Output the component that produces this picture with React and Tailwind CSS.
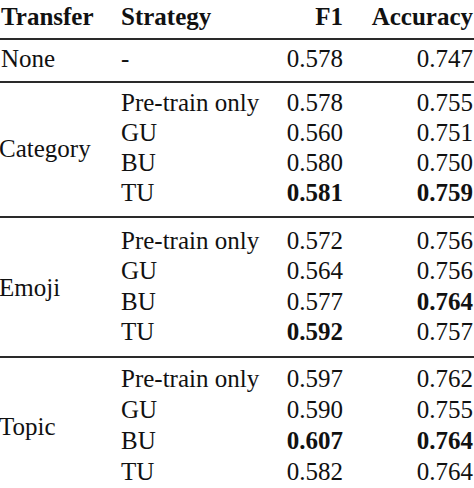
import React from 'react';

// Results table: transfer source x update strategy
const groups = [
  {
    name: 'Category',
    pt: 'pt-[4.5px]',
    pb: 'pb-[8.5px]',
    rowH: 'h-[30px]',
    rows: [
      { s: 'Pre-train only', f1: '0.578', acc: '0.755' },
      { s: 'GU', f1: '0.560', acc: '0.751' },
      { s: 'BU', f1: '0.580', acc: '0.750' },
      { s: 'TU', f1: '0.581', acc: '0.759', f1Bold: true, accBold: true },
    ],
  },
  {
    name: 'Emoji',
    pt: 'pt-[7.5px]',
    pb: 'pb-[8.5px]',
    rowH: 'h-[30.5px]',
    rows: [
      { s: 'Pre-train only', f1: '0.572', acc: '0.756' },
      { s: 'GU', f1: '0.564', acc: '0.756' },
      { s: 'BU', f1: '0.577', acc: '0.764', accBold: true },
      { s: 'TU', f1: '0.592', acc: '0.757', f1Bold: true },
    ],
  },
  {
    name: 'Topic',
    pt: 'pt-[5.5px]',
    pb: 'pb-0',
    rowH: 'h-[31px]',
    rows: [
      { s: 'Pre-train only', f1: '0.597', acc: '0.762' },
      { s: 'GU', f1: '0.590', acc: '0.755' },
      { s: 'BU', f1: '0.607', acc: '0.764', f1Bold: true, accBold: true },
      { s: 'TU', f1: '0.582', acc: '0.764' },
    ],
  },
];

const Rule = () => <div className="h-[2px] w-full bg-[#2a2a2a]" />;

const Cells = ({ s, f1, acc, f1Bold, accBold, bold }) => (
  <div className="grid grid-cols-[150px_72px_130px]">
    <div className={bold ? 'font-bold' : ''}>{s}</div>
    <div className={`text-right ${f1Bold || bold ? 'font-bold' : ''}`}>{f1}</div>
    <div className={`text-right ${accBold || bold ? 'font-bold' : ''}`}>{acc}</div>
  </div>
);

export default function App() {
  return (
    <div
      className="w-[474px] h-[488px] overflow-hidden bg-white text-[#111] text-[25px] leading-[30px]"
      style={{ fontFamily: '"Liberation Serif", "Times New Roman", serif' }}
    >
      {/* header */}
      <div className="flex h-[38px] pt-[1.5px]">
        <div className="w-[121px] pl-[1px] font-bold">Transfer</div>
        <Cells s="Strategy" f1="F1" acc="Accuracy" bold />
      </div>
      <Rule />

      {/* baseline row */}
      <div className="flex h-[41px] pt-[3.5px]">
        <div className="w-[121px] pl-[1px]">None</div>
        <Cells s="-" f1="0.578" acc="0.747" />
      </div>

      {groups.map((g, i) => (
        <div key={g.name}>
          <Rule />
          <div className={`flex ${g.pt} ${g.pb}`}>
            <div className="w-[121px] flex items-center pt-[3px]">
              <span className="-ml-[1px]">{g.name}</span>
            </div>
            <div className="flex flex-col">
              {g.rows.map((r) => (
                <div key={r.s} className={g.rowH}>
                  <Cells {...r} />
                </div>
              ))}
            </div>
          </div>
        </div>
      ))}
    </div>
  );
}
